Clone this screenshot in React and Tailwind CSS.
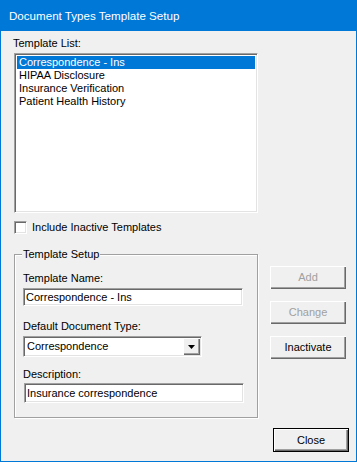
import React from 'react';

const items = ['Correspondence - Ins', 'HIPAA Disclosure', 'Insurance Verification', 'Patient Health History'];

const sunken = 'border border-t-[#a0a0a0] border-l-[#a0a0a0] border-b-white border-r-white shadow-[inset_1px_1px_#696969,inset_-1px_-1px_#e3e3e3] bg-white';
const raised = 'bg-[#f0f0f0] shadow-[inset_1px_1px_#ffffff,inset_-1px_-1px_#696969,inset_-2px_-2px_#a0a0a0]';

const Button = ({ children, disabled, main }) => (
  <div className={`flex h-[23px] w-[76px] items-center justify-center ${raised} ${disabled ? 'text-[#a0a0a0]' : 'text-black'} ${main ? 'h-[24px] border border-black' : ''}`}>
    {children}
  </div>
);

const App = () => {
  const [selected, setSelected] = React.useState(0);

  return (
    <div className="flex h-[462px] w-[357px] flex-col border-x border-b border-[#0078d7] bg-[#f0f0f0] text-[11px] leading-[13px] text-black" style={{ fontFamily: '"Liberation Sans", Arial, sans-serif' }}>
      <div className="flex h-[31px] shrink-0 items-center bg-[#0078d7] pl-[8px] text-[11.6px] text-white">
        Document Types Template Setup
      </div>

      <div className="flex flex-col pl-[13px]">
        <div className="mt-[6px] -ml-px">Template List:</div>
        <div className={`mt-[3px] h-[160px] w-[244px] p-[2px] ${sunken}`}>
          {items.map((item, i) => (
            <div key={item} onClick={() => setSelected(i)} className={`h-[13px] pl-[2px] ${i === selected ? 'bg-[#0078d7] text-white' : ''}`}>
              {item}
            </div>
          ))}
        </div>

        <div className="mt-[8px] flex items-center gap-[5px]">
          <div className={`h-[13px] w-[13px] ${sunken}`} />
          <span>Include Inactive Templates</span>
        </div>

        <div className="flex">
          <div className="relative mt-[20px] h-[164px] w-[244px] border border-[#a0a0a0] shadow-[inset_1px_1px_#ffffff,1px_1px_#ffffff]">
            <span className="absolute -top-[7px] left-[7px] bg-[#f0f0f0] px-px">Template Setup</span>
            <div className="flex flex-col pl-[8px]">
              <div className="mt-[17px]">Template Name:</div>
              <div className={`mt-[3px] flex h-[18px] w-[220px] items-center pl-[2px] ${sunken}`}>Correspondence - Ins</div>
              <div className="mt-[14px]">Default Document Type:</div>
              <div className={`mt-[3px] flex h-[21px] w-[179px] items-center justify-between pl-[3px] pr-px ${sunken}`}>
                <span>Correspondence</span>
                <div className={`flex h-[17px] w-[17px] items-center justify-center ${raised}`}>
                  <svg width="7" height="4" viewBox="0 0 7 4"><path d="M0 0h7L3.5 4z" fill="#000" /></svg>
                </div>
              </div>
              <div className="mt-[11px]">Description:</div>
              <div className={`mt-[2px] ml-px flex h-[20px] w-[220px] items-center pl-[2px] ${sunken}`}>Insurance correspondence</div>
            </div>
          </div>

          <div className="mt-[32px] ml-[12px] flex flex-col gap-[12px]">
            <Button disabled>Add</Button>
            <Button disabled>Change</Button>
            <Button>Inactivate</Button>
          </div>
        </div>

        <div className="mt-[10px] mr-[7px] self-end">
          <Button main>Close</Button>
        </div>
      </div>
    </div>
  );
};

export default App;
